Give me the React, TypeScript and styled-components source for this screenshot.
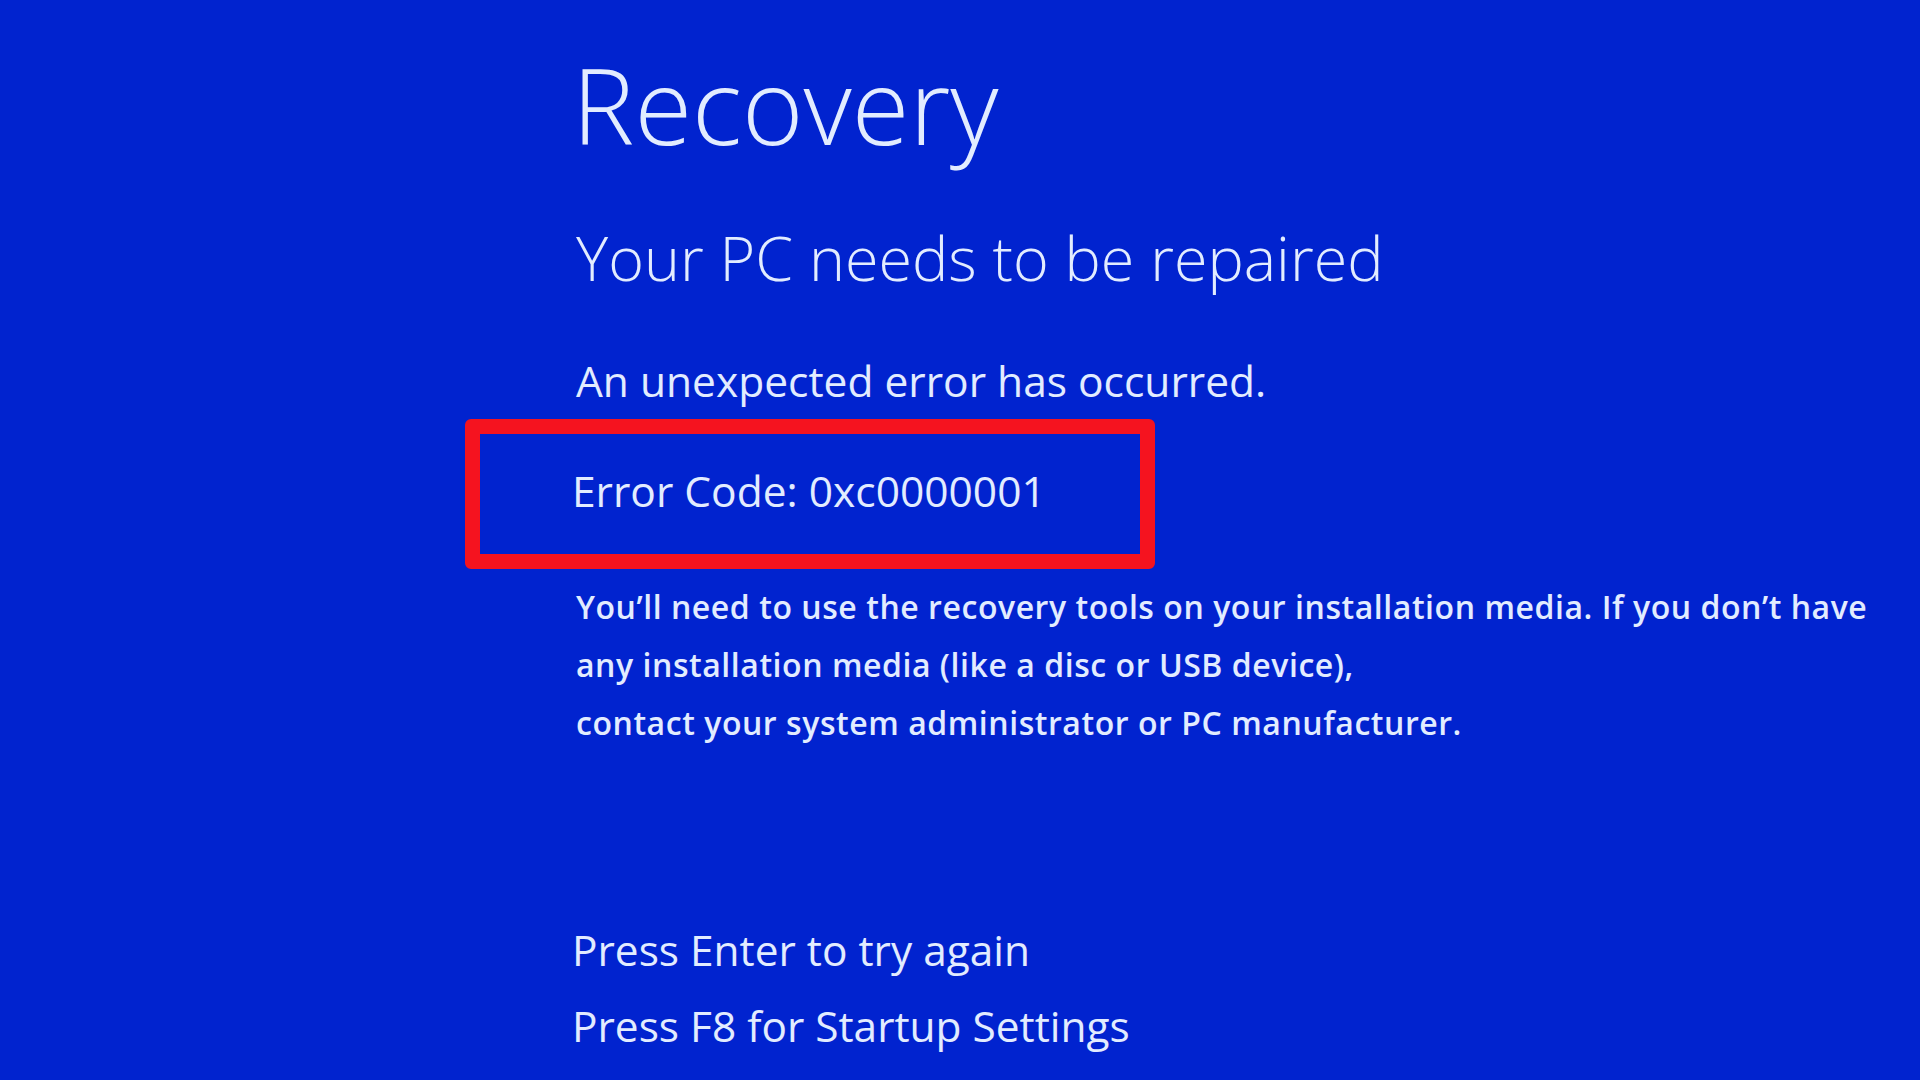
import styled, { createGlobalStyle } from "styled-components";

const GlobalStyle = createGlobalStyle`
  html, body {
    margin: 0;
    padding: 0;
    background: #0123cf;
  }
  * {
    box-sizing: border-box;
  }
`;

const Screen = styled.main`
  width: 1920px;
  height: 1080px;
  overflow: hidden;
  background: #0123cf;
  color: #e2ecff;
  font-family: "Open Sans", "Noto Sans", sans-serif;
  padding: 45px 0 0 572px;
  display: flex;
  flex-direction: column;
  align-items: flex-start;
`;

const Title = styled.h1`
  margin: 0;
  font-size: 105px;
  font-weight: 300;
  line-height: 120px;
`;

const Subtitle = styled.h2`
  margin: 53px 0 0 4px;
  font-size: 61px;
  font-weight: 300;
  line-height: 80px;
`;

const Message = styled.p`
  margin: 55px 0 0 4px;
  font-size: 42.5px;
  font-weight: 400;
  line-height: 56px;
`;

const Highlight = styled.div`
  width: 690px;
  height: 150px;
  margin: 10px 0 0 -107px;
  padding: 29px 0 0 92px;
  border: 15px solid #f5131f;
  border-radius: 6px;
`;

const Code = styled.p`
  margin: 0;
  font-size: 42.5px;
  font-weight: 400;
  line-height: 56px;
`;

const Details = styled.div`
  margin: 9px 0 0 4px;
  font-size: 32px;
  font-weight: 600;
  letter-spacing: 0.55px;
  line-height: 58px;
`;

const Line = styled.span`
  display: block;
  white-space: nowrap;
`;

const Actions = styled.div`
  margin: 160px 0 0 0;
  font-size: 42.4px;
  font-weight: 400;
  line-height: 76px;
`;

export default function App() {
  return (
    <>
      <GlobalStyle />
      <Screen>
        <Title>Recovery</Title>
        <Subtitle>Your PC needs to be repaired</Subtitle>
        <Message>An unexpected error has occurred.</Message>
        <Highlight>
          <Code>Error Code: 0xc0000001</Code>
        </Highlight>
        <Details>
          <Line>
            You’ll need to use the recovery tools on your installation media. If you don’t have
          </Line>
          <Line>any installation media (like a disc or USB device),</Line>
          <Line>contact your system administrator or PC manufacturer.</Line>
        </Details>
        <Actions>
          <Line>Press Enter to try again</Line>
          <Line>Press F8 for Startup Settings</Line>
        </Actions>
      </Screen>
    </>
  );
}
